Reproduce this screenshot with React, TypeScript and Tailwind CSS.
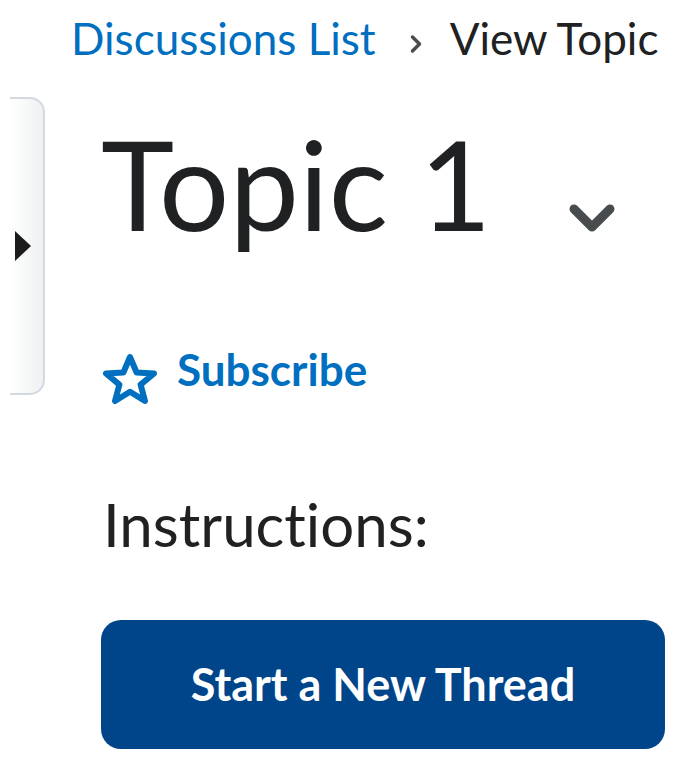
import React from "react";

function StarOutline() {
  return (
    <svg width="58" height="52" viewBox="0 0 58 52" className="mt-[10px] shrink-0">
      <polygon
        points="29,4 35.6,19.5 53,20.5 39.6,31.6 44,48 29,38.8 14,48 18.4,31.6 5,20.5 22.4,19.5"
        fill="none"
        stroke="#006fbf"
        strokeWidth="6"
        strokeLinejoin="round"
      />
    </svg>
  );
}

export default function App() {
  return (
    <div className="relative h-[765px] w-[686px] overflow-hidden bg-white font-['Lato','Noto_Sans',sans-serif] text-[#202122] [font-variant-ligatures:none]">
      {/* breadcrumb */}
      <nav className="flex h-[97px] items-start pl-[71px] pt-[12px] text-[44px] leading-[52px]">
        <a className="text-[#006fbf]">Discussions List</a>
        <svg width="14" height="20" viewBox="0 0 14 20" className="ml-[33px] mr-[27px] mt-[22px]">
          <path d="M3.5 3 L10.5 10 L3.5 17" fill="none" stroke="#494c4e" strokeWidth="3.5" strokeLinecap="round" strokeLinejoin="round" />
        </svg>
        <span className="text-[#202122]">View Topic</span>
      </nav>

      <div className="flex items-start">
        {/* collapsed side panel tab */}
        <button className="ml-[10px] flex h-[298px] w-[35px] items-center rounded-r-[15px] border-y-2 border-r-2 border-[#d3d9e3] bg-gradient-to-r from-white to-[#eef0f2] pl-[5px]">
          <svg width="16" height="30" viewBox="0 0 16 30">
            <polygon points="0,0 16,15 0,30" fill="#1b1b1b" />
          </svg>
        </button>

        <div className="ml-[56px] flex flex-col">
          <div className="mt-[12px] flex items-start">
            <h1 className="text-[124px] font-normal leading-[148px] text-[#202122]">Topic 1</h1>
            <svg width="48" height="32" viewBox="0 0 48 32" className="ml-[76px] mt-[94px]">
              <path d="M6 6 L24 24 L42 6" fill="none" stroke="#494c4e" strokeWidth="9" strokeLinecap="round" strokeLinejoin="round" />
            </svg>
          </div>

          <a className="mt-[86px] flex items-start gap-[18px]">
            <StarOutline />
            <span className="text-[44px] font-bold leading-[52px] text-[#006fbf]">Subscribe</span>
          </a>

          <p className="ml-[2px] mt-[83px] text-[60px] leading-[72px] text-[#202122]">Instructions:</p>

          <button className="mt-[60px] flex h-[129px] w-[564px] items-center justify-center rounded-[20px] bg-[#00458a] text-[45px] font-bold text-white">
            Start a New Thread
          </button>
        </div>
      </div>
    </div>
  );
}
